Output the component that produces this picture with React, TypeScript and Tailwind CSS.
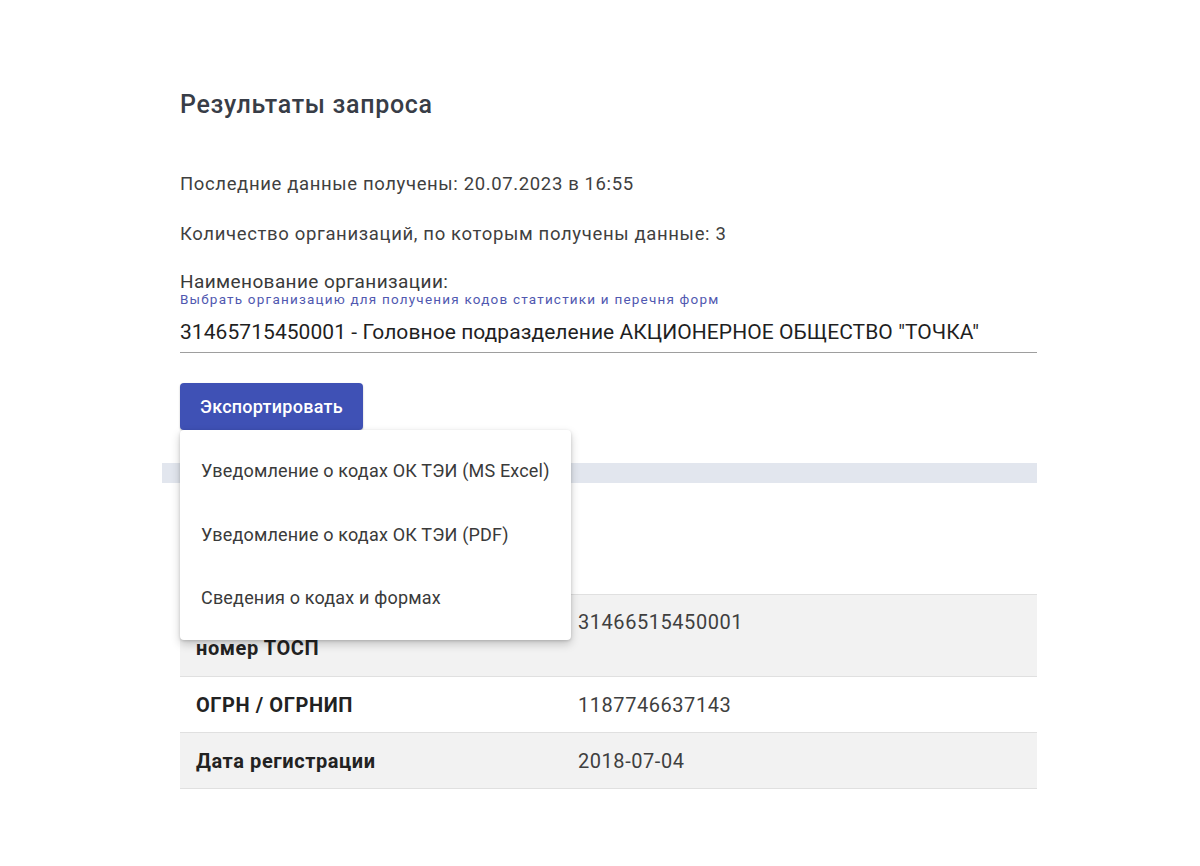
import React from 'react'

const rows = [
  { label: ['Идентификационный', 'номер ТОСП'], value: '31466515450001', tall: true, shade: true },
  { label: ['ОГРН / ОГРНИП'], value: '1187746637143', tall: false, shade: false },
  { label: ['Дата регистрации'], value: '2018-07-04', tall: false, shade: true },
]

const menuItems = [
  'Уведомление о кодах ОК ТЭИ (MS Excel)',
  'Уведомление о кодах ОК ТЭИ (PDF)',
  'Сведения о кодах и формах',
]

export default function App() {
  return (
    <div className="w-[1200px] h-[866px] bg-white font-['Roboto',sans-serif] text-[#3f3f3f] overflow-hidden">
      <div className="ml-[180px] w-[857px] pt-[90px]">
        <h1 className="text-[25px] leading-[30px] font-medium tracking-[0.7px] text-[#383d47]">Результаты запроса</h1>

        <p className="mt-[54px] text-[18.5px] leading-[20px] tracking-[0.63px]">Последние данные получены: 20.07.2023 в 16:55</p>
        <p className="mt-[30px] text-[18.5px] leading-[20px] tracking-[0.65px]">Количество организаций, по которым получены данные: 3</p>

        {/* org selector */}
        <div className="mt-[29px]">
          <div className="text-[19px] leading-[18px] tracking-[0.4px] text-[#3a3a3a]">Наименование организации:</div>
          <div className="mt-[1px] text-[13.5px] leading-[14px] tracking-[1.2px] text-[#5058b0]">Выбрать организацию для получения кодов статистики и перечня форм</div>
          <div className="mt-[14px] pb-[8px] text-[21px] leading-[24px] tracking-[0.06px] text-[#1f1f1f] border-b border-[#9e9e9e]">
            31465715450001 - Головное подразделение АКЦИОНЕРНОЕ ОБЩЕСТВО "ТОЧКА"
          </div>
        </div>

        <div className="relative mt-[30px] w-fit">
          <button className="h-[47px] px-[20px] rounded-[4px] bg-[#3f51b5] text-white text-[18px] font-medium tracking-[0.25px] shadow-[0_1px_2px_rgba(0,0,0,0.25)]">
            Экспортировать
          </button>

          <div className="absolute left-0 top-full z-10 w-[391px] pt-[9px] pb-[10px] bg-white rounded-[4px] shadow-[0_4px_10px_rgba(0,0,0,0.2),0_1px_3px_rgba(0,0,0,0.15)]">
            {menuItems.map((m) => (
              <div key={m} className="h-[63.5px] flex items-center px-[21px] text-[18px] tracking-[0.18px] text-[#3a3a3a]">{m}</div>
            ))}
          </div>
        </div>

        <div className="mt-[33px] -ml-[18px] w-[875px] h-[20px] bg-[#e2e6ee]" />

        <div className="h-[111px]" />

        <div className="border-b border-[#e0e0e0]">
          {rows.map((r) => (
            <div
              key={r.value}
              className={`flex border-t border-[#e0e0e0] ${r.shade ? 'bg-[#f2f2f2]' : 'bg-white'} ${r.tall ? 'h-[82px] items-start pt-[14px]' : 'h-[56px] items-center'}`}
            >
              <div className="w-[398px] pl-[16px] pr-[20px] text-[20px] leading-[26px] font-bold tracking-[0.58px] text-[#222]">
                {r.label.map((l) => (
                  <div key={l}>{l}</div>
                ))}
              </div>
              <div className="text-[20px] leading-[26px] tracking-[0.55px] text-[#3f3f3f]">{r.value}</div>
            </div>
          ))}
        </div>
      </div>
    </div>
  )
}
